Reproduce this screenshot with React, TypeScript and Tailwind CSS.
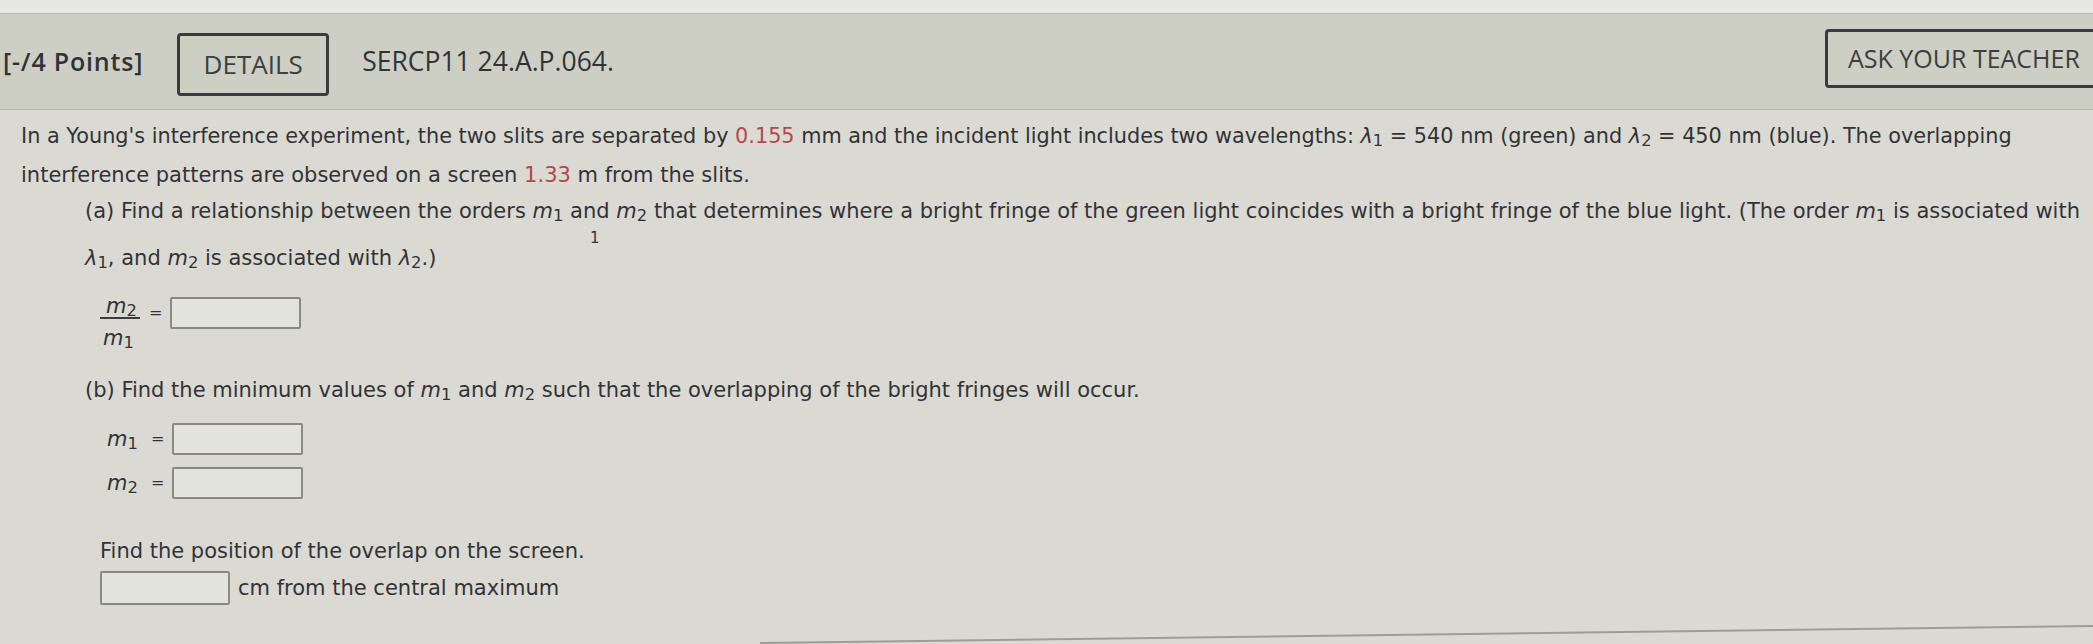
import React from "react";

const body = { fontFamily: '"DejaVu Sans", Verdana, sans-serif' };
const head = { fontFamily: '"Open Sans", "Noto Sans", sans-serif' };

function M({ sub }: { sub: string }) {
  return (
    <span className="whitespace-nowrap">
      <i>m</i>
      <sub className="text-[0.78em] relative top-[3px]">{sub}</sub>
    </span>
  );
}

function L({ sub }: { sub: string }) {
  return (
    <span className="whitespace-nowrap">
      <i>λ</i>
      <sub className="text-[0.78em] relative top-[3px]">{sub}</sub>
    </span>
  );
}

function Red({ children }: { children: React.ReactNode }) {
  return <span className="text-[#b3474f]">{children}</span>;
}

function Box({ tall = false }: { tall?: boolean }) {
  return (
    <div
      className={`${tall ? "h-[34px] w-[130px]" : "h-[32px] w-[131px]"} shrink-0 border-2 border-[#8a8a85] rounded-[2px] bg-[#e3e3de]`}
    />
  );
}

export default function App() {
  return (
    <div className="relative w-[2093px] h-[644px] overflow-hidden bg-[#dadad3] text-[#323337]">
      <div className="h-[13px] bg-[#e6e6e2]" />
      <div className="h-[97px] bg-[#cdcfc4] border-y border-[#b5b7ac] flex items-center" style={head}>
        <span className="pl-[3px] text-[25px] font-semibold tracking-[0.8px]">[-/4 Points]</span>
        <div className="ml-[34px] mt-[6px] w-[152px] h-[63px] shrink-0 border-[3px] border-[#3a3b3d] rounded-[4px] flex items-center justify-center text-[26px] text-[#3d3e41]">
          DETAILS
        </div>
        <span className="ml-[33px] text-[26.5px] font-medium">SERCP11 24.A.P.064.</span>
        <div className="ml-auto mr-[-20px] mb-[6px] shrink-0 w-[288px] h-[59px] border-[3px] border-[#3a3b3d] rounded-[4px] flex items-center pl-[20px] text-[25px] text-[#3d3e41]">
          ASK YOUR TEACHER
        </div>
      </div>

      <div className="pl-[21px] pt-[7px] text-[21px] leading-[39px]" style={body}>
        <p className="whitespace-nowrap text-[20.8px]">
          In a Young's interference experiment, the two slits are separated by <Red>0.155</Red> mm and the
          incident light includes two wavelengths: <L sub="1" /> = 540 nm (green) and <L sub="2" /> = 450 nm
          (blue). The overlapping
        </p>
        <p>
          interference patterns are observed on a screen <Red>1.33</Red> m from the slits.
        </p>

        <div className="pl-[64px]">
          <p className="mt-[-3px] whitespace-nowrap">
            (a) Find a relationship between the orders <M sub="1" />{" "}
            <span className="relative">
              and
              <span className="absolute left-[20px] top-[20px] text-[15px]">1</span>
            </span>{" "}
            <M sub="2" /> that determines where a bright fringe of the green light coincides with a bright
            fringe of the blue light. (The order <M sub="1" /> is associated with
          </p>
          <p className="mt-[8px]">
            <L sub="1" />, and <M sub="2" /> is associated with <L sub="2" />.)
          </p>

          <div className="flex items-start mt-[17px]">
            <div className="flex flex-col w-[64px] pl-[15px]">
              <span className="block leading-[22px] pl-[6px]"><M sub="2" /></span>
              <span className="block w-[40px] h-[2px] bg-[#3a3b3d]" />
              <span className="block leading-[38px] pl-[3px]"><M sub="1" /></span>
            </div>
            <span className="mt-[10px] leading-[16px] text-[16px] mr-[8px]">=</span>
            <div className="mt-[2px]">
              <Box />
            </div>
          </div>

          <p className="mt-[14px] whitespace-nowrap">
            (b) Find the minimum values of <M sub="1" /> and <M sub="2" /> such that the overlapping of the
            bright fringes will occur.
          </p>
          <div className="flex items-center h-[32px] mt-[13px] leading-none">
            <span className="w-[66px] pl-[22px]"><M sub="1" /></span>
            <span className="mr-[8px] text-[16px]">=</span>
            <Box />
          </div>
          <div className="flex items-center h-[32px] mt-[12px] leading-none">
            <span className="w-[66px] pl-[22px]"><M sub="2" /></span>
            <span className="mr-[8px] text-[16px]">=</span>
            <Box />
          </div>

          <div className="pl-[15px] mt-[33px]">
            <p>Find the position of the overlap on the screen.</p>
            <div className="flex items-center h-[34px]">
              <Box tall />
              <span className="ml-[8px] leading-none">cm from the central maximum</span>
            </div>
          </div>
        </div>
      </div>

      <svg className="absolute left-0 top-0 pointer-events-none" width="2093" height="644">
        <line x1="760" y1="643" x2="2093" y2="626" stroke="#9c9d97" strokeWidth="2" />
      </svg>
    </div>
  );
}
